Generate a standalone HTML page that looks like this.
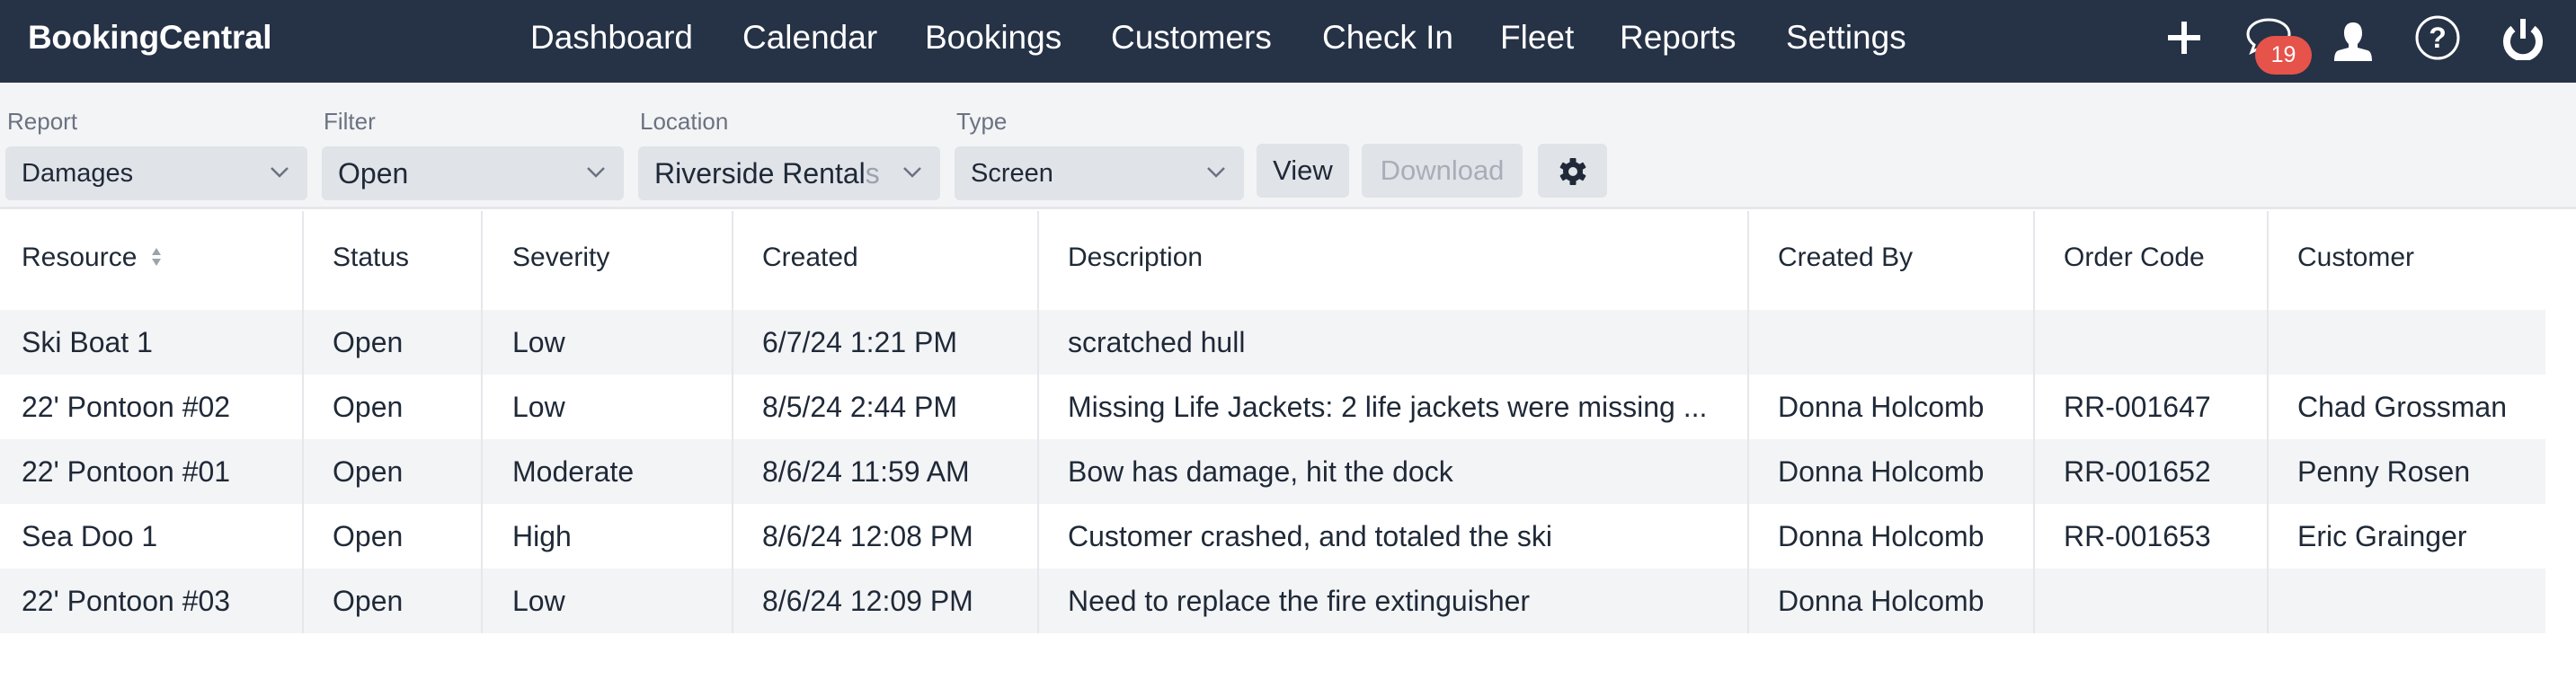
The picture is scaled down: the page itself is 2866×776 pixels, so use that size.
<!DOCTYPE html>
<html><head><meta charset="utf-8"><style>
*{box-sizing:border-box;margin:0;padding:0}
body{width:2866px;height:776px;background:#fff;font-family:"Liberation Sans",sans-serif;color:#1f2937;position:relative;overflow:hidden}
.nav{position:absolute;left:0;top:0;width:2866px;height:92px;background:#263246}
.nav span{position:absolute;top:0;line-height:84px;color:#fff;font-size:37px}
.brand{font-weight:bold;letter-spacing:-0.3px}
.tb{position:absolute;left:0;top:92px;width:2866px;height:141px;background:#f3f4f6;border-bottom:3px solid #e5e7eb}
.lbl{position:absolute;top:120px;font-size:26px;color:#6b7280}
.sel{position:absolute;top:163px;height:60px;background:#e0e3e8;border-radius:6px;font-size:28px;line-height:60px;padding-left:18px;color:#1f2937;overflow:hidden;white-space:nowrap}
.sel svg{position:absolute;right:20px;top:22px}
.btn{position:absolute;top:160px;height:60px;background:#e0e3e8;border-radius:6px;font-size:31px;line-height:60px;text-align:center}
.cell{position:absolute;font-size:32px;white-space:nowrap}
.h{font-size:30px;top:270px}
.vl{position:absolute;top:235px;height:470px;width:2px;background:#e5e7eb}
.row{position:absolute;left:0;width:2832px;height:72px}
</style></head><body>
<div class="nav">
<span class="brand" style="left:31px">BookingCentral</span>
<span style="left:590px">Dashboard</span>
<span style="left:826px">Calendar</span>
<span style="left:1029px">Bookings</span>
<span style="left:1236px">Customers</span>
<span style="left:1471px">Check In</span>
<span style="left:1669px">Fleet</span>
<span style="left:1802px">Reports</span>
<span style="left:1987px">Settings</span>
<svg style="position:absolute;left:2410px;top:22px" width="40" height="40" viewBox="0 0 40 40"><path d="M20 2V38M2 20H38" stroke="#fff" stroke-width="6"/></svg>
<svg style="position:absolute;left:2498px;top:19px" width="52" height="44" viewBox="0 0 52 44"><path d="M26 3C13 3 3 10 3 19c0 5 3 9 7 12l-3 8 10-5c3 1 6 1 9 1 13 0 23-7 23-16S39 3 26 3z" fill="none" stroke="#fff" stroke-width="3"/></svg>
<div style="position:absolute;left:2509px;top:40px;width:63px;height:43px;border-radius:22px;background:#e5534b;color:#fff;font-size:25px;line-height:43px;text-align:center">19</div>
<svg style="position:absolute;left:2596px;top:24px" width="44" height="44" viewBox="0 0 44 44"><path d="M22 1c-7 0-10 5-10 12 0 6 3 10 5 12v4L6 32c-3 1-5 4-5 12h42c0-8-2-11-5-12l-11-3v-4c2-2 5-6 5-12 0-7-3-12-10-12z" fill="#fff"/></svg>
<svg style="position:absolute;left:2686px;top:16px" width="52" height="52" viewBox="0 0 52 52"><circle cx="26" cy="26" r="23" fill="none" stroke="#fff" stroke-width="3"/><text x="26" y="37" text-anchor="middle" fill="#fff" font-size="32" font-weight="bold" font-family="Liberation Sans">?</text></svg>
<svg style="position:absolute;left:2783px;top:19px" width="48" height="48" viewBox="0 0 48 48"><path d="M13 13A18 18 0 1 0 35 13" fill="none" stroke="#fff" stroke-width="8"/><path d="M24 2V24" stroke="#fff" stroke-width="6"/></svg>
</div>
<div class="tb"></div>
<div class="lbl" style="left:8px">Report</div>
<div class="lbl" style="left:360px">Filter</div>
<div class="lbl" style="left:712px">Location</div>
<div class="lbl" style="left:1064px">Type</div>
<div class="sel" style="left:6px;width:336px;font-size:29px">Damages<svg width="22" height="14" viewBox="0 0 22 14"><path d="M2 2l9 9 9-9" fill="none" stroke="#6b7280" stroke-width="2.5"/></svg></div>
<div class="sel" style="left:358px;width:336px;font-size:32px">Open<svg width="22" height="14" viewBox="0 0 22 14"><path d="M2 2l9 9 9-9" fill="none" stroke="#6b7280" stroke-width="2.5"/></svg></div>
<div class="sel" style="left:710px;width:336px;font-size:32px;padding-left:18px">Riverside Rental<span style="color:#9ca3af">s</span><svg width="22" height="14" viewBox="0 0 22 14" style="background:#e0e3e8"><path d="M2 2l9 9 9-9" fill="none" stroke="#6b7280" stroke-width="2.5"/></svg></div>
<div class="sel" style="left:1062px;width:322px;font-size:29px">Screen<svg width="22" height="14" viewBox="0 0 22 14"><path d="M2 2l9 9 9-9" fill="none" stroke="#6b7280" stroke-width="2.5"/></svg></div>
<div class="btn" style="left:1398px;width:103px">View</div>
<div class="btn" style="left:1515px;width:179px;color:#a8aeb8">Download</div>
<div class="btn" style="left:1711px;width:77px"><svg style="margin-top:15px" width="32" height="32" viewBox="0 0 32 32"><g fill="#1f2937"><circle cx="16" cy="16" r="11"/><rect x="12.5" y="1" width="7" height="30" rx="1"/><rect x="12.5" y="1" width="7" height="30" rx="1" transform="rotate(60 16 16)"/><rect x="12.5" y="1" width="7" height="30" rx="1" transform="rotate(120 16 16)"/></g><circle cx="16" cy="16" r="5" fill="#e0e3e8"/></svg></div>

<div class="row" style="top:345px;background:#f3f4f6"></div>
<div class="row" style="top:489px;background:#f3f4f6"></div>
<div class="row" style="top:633px;background:#f3f4f6"></div>
<div class="vl" style="left:336px"></div><div class="vl" style="left:535px"></div><div class="vl" style="left:814px"></div><div class="vl" style="left:1154px"></div><div class="vl" style="left:1944px"></div><div class="vl" style="left:2262px"></div><div class="vl" style="left:2522px"></div>

<div class="cell h" style="left:24px">Resource <svg width="14" height="24" viewBox="0 0 14 24" style="vertical-align:-2px;margin-left:6px"><path d="M7 2l5 8H2zM7 22l5-8H2z" fill="#9ca3af"/></svg></div>
<div class="cell h" style="left:370px">Status</div>
<div class="cell h" style="left:570px">Severity</div>
<div class="cell h" style="left:848px">Created</div>
<div class="cell h" style="left:1188px">Description</div>
<div class="cell h" style="left:1978px">Created By</div>
<div class="cell h" style="left:2296px">Order Code</div>
<div class="cell h" style="left:2556px">Customer</div>

<div class="cell" style="top:363px;left:24px">Ski Boat 1</div><div class="cell" style="top:363px;left:370px">Open</div><div class="cell" style="top:363px;left:570px">Low</div><div class="cell" style="top:363px;left:848px">6/7/24 1:21 PM</div><div class="cell" style="top:363px;left:1188px">scratched hull</div>

<div class="cell" style="top:435px;left:24px">22' Pontoon #02</div><div class="cell" style="top:435px;left:370px">Open</div><div class="cell" style="top:435px;left:570px">Low</div><div class="cell" style="top:435px;left:848px">8/5/24 2:44 PM</div><div class="cell" style="top:435px;left:1188px">Missing Life Jackets: 2 life jackets were missing ...</div><div class="cell" style="top:435px;left:1978px">Donna Holcomb</div><div class="cell" style="top:435px;left:2296px">RR-001647</div><div class="cell" style="top:435px;left:2556px">Chad Grossman</div>

<div class="cell" style="top:507px;left:24px">22' Pontoon #01</div><div class="cell" style="top:507px;left:370px">Open</div><div class="cell" style="top:507px;left:570px">Moderate</div><div class="cell" style="top:507px;left:848px">8/6/24 11:59 AM</div><div class="cell" style="top:507px;left:1188px">Bow has damage, hit the dock</div><div class="cell" style="top:507px;left:1978px">Donna Holcomb</div><div class="cell" style="top:507px;left:2296px">RR-001652</div><div class="cell" style="top:507px;left:2556px">Penny Rosen</div>

<div class="cell" style="top:579px;left:24px">Sea Doo 1</div><div class="cell" style="top:579px;left:370px">Open</div><div class="cell" style="top:579px;left:570px">High</div><div class="cell" style="top:579px;left:848px">8/6/24 12:08 PM</div><div class="cell" style="top:579px;left:1188px">Customer crashed, and totaled the ski</div><div class="cell" style="top:579px;left:1978px">Donna Holcomb</div><div class="cell" style="top:579px;left:2296px">RR-001653</div><div class="cell" style="top:579px;left:2556px">Eric Grainger</div>

<div class="cell" style="top:651px;left:24px">22' Pontoon #03</div><div class="cell" style="top:651px;left:370px">Open</div><div class="cell" style="top:651px;left:570px">Low</div><div class="cell" style="top:651px;left:848px">8/6/24 12:09 PM</div><div class="cell" style="top:651px;left:1188px">Need to replace the fire extinguisher</div><div class="cell" style="top:651px;left:1978px">Donna Holcomb</div>
</body></html>
